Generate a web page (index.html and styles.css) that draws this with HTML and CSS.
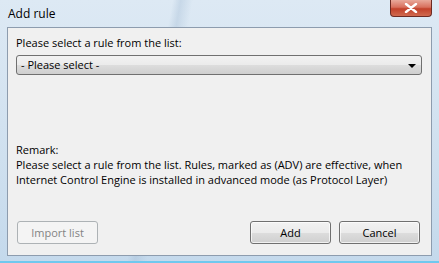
FILE: index.html
```html
<!DOCTYPE html>
<html>
<head>
<meta charset="utf-8">
<link rel="stylesheet" href="styles.css">
</head>
<body>
<div class="window">
  <div class="titlebar">
    <span class="title">Add rule</span>
    <div class="close-btn">
      <svg width="14" height="10" viewBox="0 0 14 10"><path d="M2 1 L12 9 M12 1 L2 9" stroke="#ffffff" stroke-width="2.4" stroke-linecap="round"/></svg>
    </div>
  </div>
  <div class="client">
    <div class="label">Please select a rule from the list:</div>
    <div class="combo">
      <span class="combo-text">- Please select -</span>
      <span class="combo-arrow"></span>
    </div>
    <div class="spacer"></div>
    <div class="remark">
      <div>Remark:</div>
      <div>Please select a rule from the list. Rules, marked as (ADV) are effective, when</div>
      <div>Internet Control Engine is installed in advanced mode (as Protocol Layer)</div>
    </div>
    <div class="buttons">
      <div class="btn disabled">Import list</div>
      <div class="btn-group">
        <div class="btn">Add</div>
        <div class="btn">Cancel</div>
      </div>
    </div>
  </div>
</div>
</body>
</html>
```
FILE: styles.css
```css
html, body {
  margin: 0;
  padding: 0;
}
body {
  width: 439px;
  height: 263px;
  overflow: hidden;
  font-family: "Open Sans", "Liberation Sans", sans-serif;
  font-size: 11px;
  color: #000;
}
.window {
  width: 439px;
  height: 263px;
  box-sizing: border-box;
  display: flex;
  flex-direction: column;
  padding: 0 7px 7px 7px;
  background:
    linear-gradient(100deg, rgba(255,255,255,0) 0px, rgba(255,255,255,0) 170px, rgba(160,185,210,0.35) 178px, rgba(255,255,255,0) 190px),
    linear-gradient(180deg, #dde9f4 0%, #cfe0ef 60%, #c4d9ec 100%);
  border-bottom: 0;
  box-shadow: inset 0 -2px 0 #6fc8ee;
}
.titlebar {
  height: 27px;
  display: flex;
  align-items: flex-start;
  justify-content: space-between;
  flex-shrink: 0;
}
.title {
  font-size: 12px;
  margin-top: 5px;
  margin-left: 1px;
}
.close-btn {
  width: 42px;
  height: 17px;
  box-sizing: border-box;
  border: 1px solid #6d2a22;
  border-top: 0;
  border-radius: 0 0 4px 4px;
  background: linear-gradient(180deg, #e9a99b 0%, #d8705d 45%, #c2412a 55%, #d06a4f 100%);
  display: flex;
  align-items: center;
  justify-content: center;
  margin-right: 0;
}
.client {
  flex: 1;
  background: #f0f0f0;
  border: 1px solid #8d9cae;
  display: flex;
  flex-direction: column;
  padding: 7px 9px 11px 8px;
}
.label {
  line-height: 15px;
  height: 15px;
}
.combo {
  margin-top: 5px;
  height: 20px;
  box-sizing: border-box;
  border: 1px solid #707070;
  border-radius: 3px;
  background: linear-gradient(180deg, #f2f2f2 0%, #ebebeb 50%, #dddddd 51%, #cfcfcf 100%);
  display: flex;
  align-items: center;
  justify-content: space-between;
  padding: 0 5px 0 4px;
}
.combo-text {
  line-height: 16px;
}
.combo-arrow {
  width: 0;
  height: 0;
  border-left: 4px solid transparent;
  border-right: 4px solid transparent;
  border-top: 4px solid #000;
  margin-top: 1px;
}
.spacer {
  flex: 1;
}
.remark {
  line-height: 15px;
}
.buttons {
  margin-top: 34px;
  display: flex;
  justify-content: space-between;
  align-items: center;
}
.btn-group {
  display: flex;
  gap: 8px;
  margin-right: 2px;
}
.btn {
  width: 81px;
  height: 23px;
  box-sizing: border-box;
  border: 1px solid #707070;
  border-radius: 3px;
  background: linear-gradient(180deg, #f2f2f2 0%, #ebebeb 50%, #dddddd 51%, #cfcfcf 100%);
  box-shadow: inset 0 0 0 1px rgba(255,255,255,0.7);
  display: flex;
  align-items: center;
  justify-content: center;
}
.btn.disabled {
  margin-left: 1px;
  color: #838383;
  border-color: #adb2b5;
  background: #f4f4f4;
  box-shadow: none;
}
```
